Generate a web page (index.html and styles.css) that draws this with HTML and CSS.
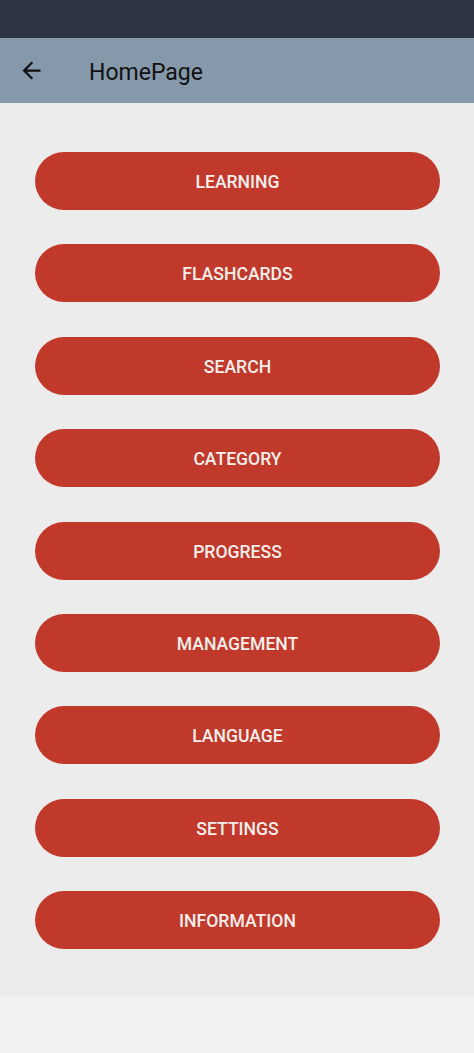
FILE: index.html
```html
<!DOCTYPE html>
<html>
<head>
<meta charset="utf-8">
<link rel="stylesheet" href="styles.css">
</head>
<body>
<div class="status"></div>
<header class="appbar">
  <svg class="back" viewBox="0 0 24 24" width="27" height="27"><path d="M20 11H7.83l5.59-5.59L12 4l-8 8 8 8 1.41-1.41L7.83 13H20v-2z" fill="#111"/></svg>
  <h1 class="title">HomePage</h1>
</header>
<main class="content">
  <button class="btn">LEARNING</button>
  <button class="btn">FLASHCARDS</button>
  <button class="btn">SEARCH</button>
  <button class="btn">CATEGORY</button>
  <button class="btn">PROGRESS</button>
  <button class="btn">MANAGEMENT</button>
  <button class="btn">LANGUAGE</button>
  <button class="btn">SETTINGS</button>
  <button class="btn">INFORMATION</button>
</main>
<div class="bottom"></div>
</body>
</html>
```
FILE: styles.css
```css
html, body {
  margin: 0;
  padding: 0;
  background: #f2f2f2;
  font-family: Roboto, "Liberation Sans", sans-serif;
}
.status {
  height: 38px;
  background: #2e3441;
}
.appbar {
  height: 65px;
  background: #8699ab;
  display: flex;
  align-items: center;
  box-sizing: border-box;
  padding-left: 18px;
}
.back {
  display: block;
}
.title {
  margin: 3px 0 0 44px;
  font-size: 23px;
  font-weight: 400;
  color: #111;
}
.content {
  background: #ececec;
  height: 894px;
  box-sizing: border-box;
  padding: 49px 34px 0 35px;
  display: flex;
  flex-direction: column;
  gap: 34.4px;
}
.btn {
  height: 58px;
  width: 405px;
  border: none;
  border-radius: 29px;
  background: #c0392b;
  color: #fbeeec;
  font-family: Roboto, "Liberation Sans", sans-serif;
  font-size: 17.6px;
  font-weight: 500;
  letter-spacing: 0;
  padding: 2px 0 0 0;
  flex: none;
}
.bottom {
  height: 56px;
  background: #f2f2f2;
}
```
